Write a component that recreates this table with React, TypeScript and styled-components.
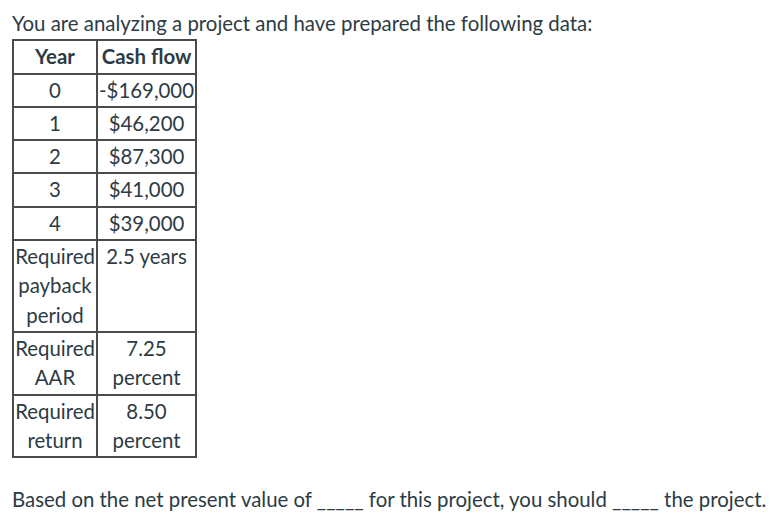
import * as React from 'react';
import styled, { createGlobalStyle } from 'styled-components';

const GlobalStyle = createGlobalStyle`
  body {
    margin: 0;
    background: #ffffff;
    color: #2d3b45;
    font-family: Lato, "Open Sans", sans-serif;
    font-size: 20.4px;
    line-height: 29.3px;
  }
`;

const Page = styled.div`
  padding: 9px 0 0 12px;
`;

const Intro = styled.p`
  margin: 0 0 1px 0;
`;

const DataTable = styled.table`
  border-collapse: collapse;
  border: 2px solid #4b4b4b;
`;

const Cell = styled.td<{ $head?: boolean; $width?: number }>`
  border: 2px solid #4b4b4b;
  padding: 1px;
  text-align: center;
  vertical-align: top;
  font-weight: ${(p) => (p.$head ? 700 : 400)};
  width: ${(p) => (p.$width ? `${p.$width}px` : 'auto')};
`;

const Question = styled.p`
  margin: 27px 0 0 0;
  white-space: nowrap;
`;

const rows: [string[], string[]][] = [
  [['0'], ['-$169,000']],
  [['1'], ['$46,200']],
  [['2'], ['$87,300']],
  [['3'], ['$41,000']],
  [['4'], ['$39,000']],
  [['Required', 'payback', 'period'], ['2.5 years']],
  [['Required', 'AAR'], ['7.25', 'percent']],
  [['Required', 'return'], ['8.50', 'percent']],
];

const Lines = ({ lines }: { lines: string[] }) => (
  <React.Fragment>
    {lines.map((l, i) => (
      <React.Fragment key={i}>
        {i > 0 && <br />}
        {l}
      </React.Fragment>
    ))}
  </React.Fragment>
);

export default function App() {
  return (
    <Page>
      <GlobalStyle />
      <Intro>You are analyzing a project and have prepared the following data:</Intro>
      <DataTable>
        <tbody>
          <tr>
            <Cell $head $width={80}>Year</Cell>
            <Cell $head $width={95}>Cash flow</Cell>
          </tr>
          {rows.map(([a, b], i) => (
            <tr key={i}>
              <Cell><Lines lines={a} /></Cell>
              <Cell><Lines lines={b} /></Cell>
            </tr>
          ))}
        </tbody>
      </DataTable>
      <Question>
        Based on the net present value of _____ for this project, you should _____ the project.
      </Question>
    </Page>
  );
}
